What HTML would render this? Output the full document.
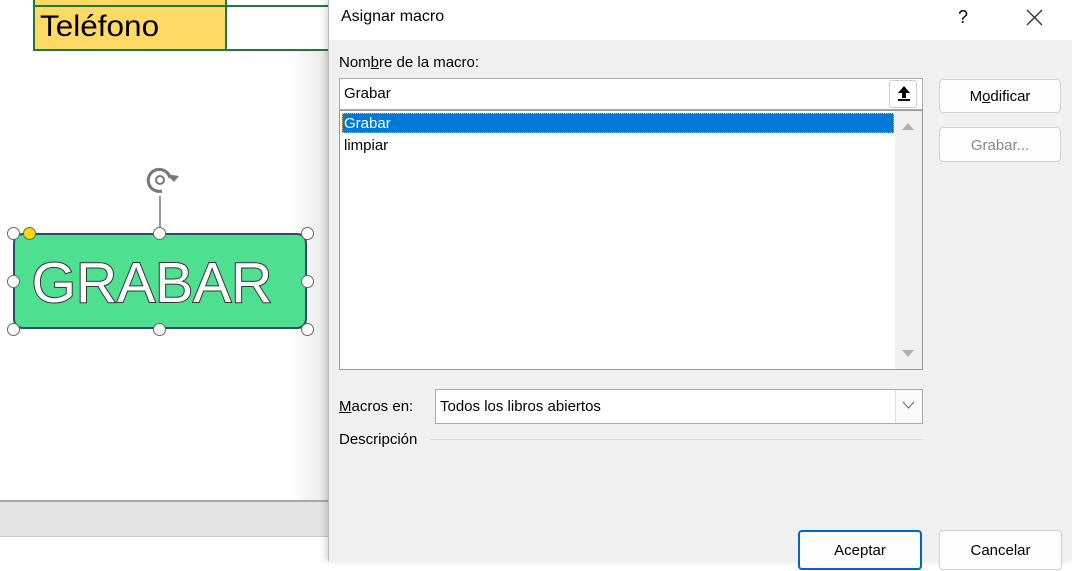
<!DOCTYPE html>
<html><head><meta charset="utf-8"><style>
*{margin:0;padding:0;box-sizing:border-box}
body{width:1072px;height:561px;overflow:hidden;position:relative;background:#fff;font-family:"Segoe UI","Liberation Sans",sans-serif;font-size:15px;color:#000}
.a{position:absolute}
.btn{position:absolute;background:#fdfdfd;border:1px solid #d0d0d0;border-radius:4px;text-align:center;font-size:15px}
.h{width:13px;height:13px;border-radius:50%;background:#fff;border:1.5px solid #666;position:absolute}
</style></head><body>
<div class="a" style="left:290px;top:0;width:40px;height:500px;background:linear-gradient(90deg,#fff,#e6e6e6)"></div>
<!-- spreadsheet -->
<div class="a" style="left:33px;top:-2px;width:194px;height:9px;background:#ffd966;border:2px solid #1e7a3c"></div>
<div class="a" style="left:33px;top:7px;width:194px;height:44px;background:#ffd966;border:2px solid #1e7a3c;border-top:none"></div>
<div class="a" style="left:227px;top:-2px;width:105px;height:53px;background:#fff;border:2px solid #1e7a3c;border-left:none;border-right:none"></div>
<div class="a" style="left:227px;top:5px;width:105px;height:2px;background:#1e7a3c"></div>
<div class="a" style="left:40px;top:10px;font-size:30px;font-family:'Liberation Sans',sans-serif;transform:scaleX(1.05);transform-origin:left">Teléfono</div>
<div class="a" style="left:0;top:500px;width:330px;height:2px;background:#a8a8a8"></div>
<div class="a" style="left:0;top:502px;width:330px;height:35px;background:#e3e3e3;border-bottom:1px solid #c8c8c8"></div>
<!-- shape -->
<svg class="a" style="left:140px;top:163px" width="44" height="70"><path d="M30 15 A11 11 0 1 0 22 28" fill="none" stroke="#777" stroke-width="3"/><path d="M26 11 l8 8 l5 -6z" fill="#777"/><circle cx="20" cy="17" r="4" fill="none" stroke="#777" stroke-width="2"/><line x1="20" y1="33" x2="20" y2="70" stroke="#777" stroke-width="1.5"/></svg>
<div class="a" style="left:13px;top:233px;width:294px;height:96px;background:#4fdf90;border:2px solid #2d4a73;border-radius:10px"></div>
<div class="a" style="left:5px;top:247px;width:294px;text-align:center;font-family:'Liberation Sans',sans-serif;font-size:57px;color:#fff;-webkit-text-stroke:2px #333;paint-order:stroke fill;line-height:72px">GRABAR</div>
<div class="h" style="left:7px;top:227px"></div><div class="h" style="left:153px;top:227px"></div><div class="h" style="left:301px;top:227px"></div>
<div class="h" style="left:7px;top:275px"></div><div class="h" style="left:301px;top:275px"></div>
<div class="h" style="left:7px;top:323px"></div><div class="h" style="left:153px;top:323px"></div><div class="h" style="left:301px;top:323px"></div>
<div class="a" style="left:23px;top:227px;width:13px;height:13px;border-radius:50%;background:#f5d800;border:1.5px solid #666"></div>
<!-- dialog -->
<div class="a" style="left:328px;top:0;width:744px;height:561px;background:#f0f0f0;border-left:1px solid #bbb;box-shadow:-3px 0 6px rgba(0,0,0,.15)"></div>
<div class="a" style="left:329px;top:0;width:743px;height:40px;background:#fff"></div>
<div class="a" style="left:341px;top:8px;font-size:16px">Asignar macro</div>
<div class="a" style="left:958px;top:7px;font-size:18px">?</div>
<svg class="a" style="left:1026px;top:9px" width="17" height="17"><path d="M1 1L16 16M16 1L1 16" stroke="#333" stroke-width="1.4"/></svg>
<div class="a" style="left:339px;top:54px">Nom<u>b</u>re de la macro:</div>
<div class="a" style="left:339px;top:78px;width:584px;height:32px;background:#fff;border:1px solid #aaa"></div>
<div class="a" style="left:344px;top:85px">Grabar</div>
<div class="a" style="left:889px;top:80px;width:28px;height:28px;border:1px solid #ccc;border-radius:3px;background:#fff"></div>
<svg class="a" style="left:897px;top:85px" width="14" height="17"><path d="M7 1L1 8h4v5h4V8h4z" fill="#000"/><rect x="1" y="14" width="12" height="2" fill="#000"/></svg>
<div class="a" style="left:339px;top:110px;width:584px;height:260px;background:#fff;border:1px solid #999"></div>
<div class="a" style="left:342px;top:113px;width:552px;height:20px;background:#0078d7;border:1px dotted #ffaa55"></div>
<div class="a" style="left:344px;top:115px;color:#fff">Grabar</div>
<div class="a" style="left:344px;top:137px">limpiar</div>
<div class="a" style="left:895px;top:111px;width:27px;height:258px;background:#f0f0f0"></div>
<svg class="a" style="left:901px;top:121px" width="14" height="10"><path d="M1 9L7 2L13 9z" fill="#b0b0b0"/></svg>
<svg class="a" style="left:901px;top:349px" width="14" height="10"><path d="M1 1L7 8L13 1z" fill="#b0b0b0"/></svg>
<div class="btn" style="left:939px;top:79px;width:122px;height:34px;line-height:34px">M<u>o</u>dificar</div>
<div class="btn" style="left:939px;top:127px;width:122px;height:35px;line-height:35px;color:#888">Grabar...</div>
<div class="a" style="left:339px;top:398px"><u>M</u>acros en:</div>
<div class="a" style="left:435px;top:389px;width:488px;height:35px;background:#fff;border:1px solid #aaa"></div>
<div class="a" style="left:440px;top:398px">Todos los libros abiertos</div>
<div class="a" style="left:895px;top:390px;width:27px;height:33px;border-left:1px solid #ddd;background:#fafafa"></div>
<svg class="a" style="left:902px;top:401px" width="13" height="9"><path d="M1 1L6.5 7L12 1" fill="none" stroke="#666"/></svg>
<div class="a" style="left:339px;top:431px">Descripción</div>
<div class="a" style="left:430px;top:439px;width:493px;height:1px;background:#d8d8d8"></div>
<div class="btn" style="left:798px;top:530px;width:124px;height:40px;line-height:38px;border:2px solid #0067c0">Aceptar</div>
<div class="btn" style="left:939px;top:530px;width:123px;height:40px;line-height:40px">Cancelar</div>
</body></html>
